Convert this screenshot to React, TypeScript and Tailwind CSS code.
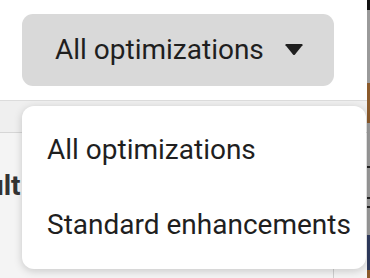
import { useState } from "react";

const options = ["All optimizations", "Standard enhancements"];

function DropArrow() {
  return (
    <svg width="20" height="12" viewBox="0 0 20 12" className="shrink-0">
      <path d="M1.5 1.2 Q1 0 2.4 0 H17.6 Q19 0 18.5 1.2 L11 10.6 Q10 11.6 9 10.6 Z" fill="#1f1f1f" />
    </svg>
  );
}

export default function App() {
  const [selected] = useState(options[0]);

  return (
    <div
      className="relative flex w-[370px] h-[278px] overflow-hidden bg-white"
      style={{ fontFamily: 'Roboto, "Liberation Sans", sans-serif' }}
    >
      {/* page */}
      <div className="flex flex-col w-[367px] h-full">
        <div className="h-[100px] shrink-0 bg-white pt-[14px] pl-[22px]">
          <button className="flex items-center h-[72px] w-[312px] rounded-[11px] bg-[#d9d9d9] pl-[33px] pr-[30px] text-[28px] text-[#1f1f1f] leading-none">
            <span className="flex-1 text-left">{selected}</span>
            <DropArrow />
          </button>
        </div>
        <div className="h-[1px] bg-[#dcdcdc]" />
        <div className="h-[32px] shrink-0 bg-[#efefef] border-b border-[#d6d6d6]" />
        <div className="flex-1 flex bg-[#f4f4f4]">
          <div className="relative w-[333px] h-full">
            <span className="absolute left-[-12px] top-[32px] text-[28px] font-bold text-[#333]">ult</span>
          </div>
          <div className="w-[1px] bg-[#cfcfcf]" />
          <div className="flex-1 bg-[#f4f4f4]" />
        </div>
      </div>

      {/* window edge strip */}
      <div className="flex flex-col w-[3px] h-full">
        <div className="h-[10px] bg-[#111]" />
        <div className="h-[73px] bg-[#9a9a9a]" />
        <div className="h-[40px] bg-[#8b5a2b]" />
        <div className="h-[43px] bg-[#9a9a9a]" />
        <div className="h-[2px] bg-[#222]" />
        <div className="h-[29px] bg-[#9a9a9a]" />
        <div className="h-[2px] bg-[#222]" />
        <div className="h-[7px] bg-[#9a9a9a]" />
        <div className="h-[2px] bg-[#222]" />
        <div className="h-[27px] bg-[#9a9a9a]" />
        <div className="h-[35px] bg-[#2f3b5e]" />
        <div className="flex-1 bg-[#8b5a2b]" />
      </div>

      {/* dropdown menu */}
      <div className="absolute left-[22px] top-[106px] w-[344px] rounded-[12px] bg-white pt-[6px] pb-[7px] shadow-[0_2px_8px_rgba(0,0,0,0.18)]">
        {options.map((o) => (
          <div key={o} className="h-[75px] leading-[75px] pl-[25px] text-[28px] text-[#1f1f1f] whitespace-nowrap">
            {o}
          </div>
        ))}
      </div>
    </div>
  );
}
